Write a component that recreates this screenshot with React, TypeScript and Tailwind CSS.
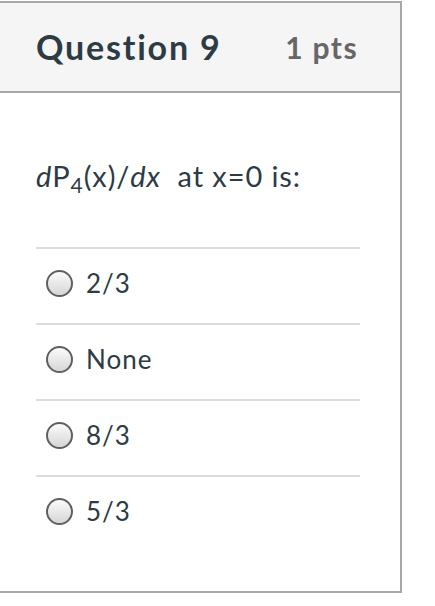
import React from "react";

const options = ["2/3", "None", "8/3", "5/3"];

function Radio() {
  return (
    <span className="inline-block w-[27px] h-[27px] rounded-full border-2 border-[#5f5f5f] bg-gradient-to-b from-[#fbfbfb] to-[#d6d6d6] shrink-0" />
  );
}

export default function App() {
  return (
    <div className="w-[435px] h-[606px] bg-white" style={{ fontFamily: "Lato, 'Open Sans', sans-serif" }}>
      <div className="pt-[1px]">
        <div className="w-[402px] border-t-2 border-r-2 border-b-2 border-[#a8a8a8] h-[592px] flex flex-col">
          <div className="h-[90px] bg-[#f5f5f5] border-b-2 border-[#a8a8a8] flex items-center justify-between pl-[36px] pr-[42px] shrink-0">
            <span className="text-[34px] font-bold text-[#2d3b45] leading-none tracking-[1.8px]">Question 9</span>
            <span className="text-[30px] font-bold text-[#666666] leading-none tracking-[1.4px]">1 pts</span>
          </div>
          <div className="px-[36px] pr-[40px]">
            <div className="pt-[63px] pb-[48px] text-[29px] text-[#2d3b45] leading-[40px] tracking-[0.9px]">
              <i>d</i>P<span className="text-[21px] relative top-[6px]">4</span>(x)/<i>dx</i>&nbsp; at x=0 is:
            </div>
            {options.map((o) => (
              <div key={o}>
                <div className="h-[2px] bg-[#dddddd]" />
                <div className="h-[74px] flex items-center gap-[13px] pl-[10px] pb-[5px]">
                  <Radio />
                  <span className="text-[26px] text-[#2d3b45] tracking-[1px]">{o}</span>
                </div>
              </div>
            ))}
          </div>
        </div>
      </div>
    </div>
  );
}
